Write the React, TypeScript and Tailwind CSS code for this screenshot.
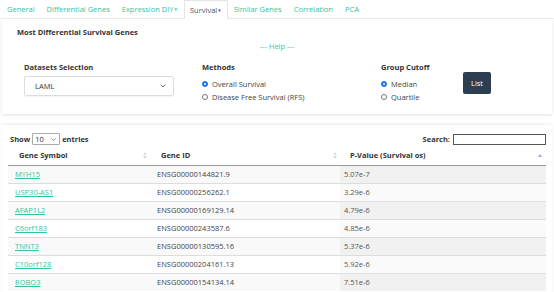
import React from 'react';
import { ChevronDown } from 'lucide-react';

const TABS = [
  { label: 'General' },
  { label: 'Differential Genes' },
  { label: 'Expression DIY', caret: true },
  { label: 'Survival', caret: true, active: true },
  { label: 'Similar Genes' },
  { label: 'Correlation' },
  { label: 'PCA' },
];

const ROWS = [
  ['MYH15', 'ENSG00000144821.9', '5.07e-7'],
  ['USP30-AS1', 'ENSG00000256262.1', '3.29e-6'],
  ['AFAP1L2', 'ENSG00000169129.14', '4.79e-6'],
  ['C6orf183', 'ENSG00000243587.6', '4.85e-6'],
  ['TNNT3', 'ENSG00000130595.16', '5.37e-6'],
  ['C10orf128', 'ENSG00000204161.13', '5.92e-6'],
  ['ROBO3', 'ENSG00000154134.14', '7.51e-6'],
];

const Radio = ({ checked, label }: { checked?: boolean; label: string }) => (
  <div className="flex items-center h-[13px] gap-[4px]">
    {checked ? (
      <span className="w-[6px] h-[6px] rounded-full bg-[#1a73e8] border border-[#1a73e8] flex items-center justify-center">
        <span className="w-[2px] h-[2px] rounded-full bg-white" />
      </span>
    ) : (
      <span className="w-[6px] h-[6px] rounded-full border border-[#777] bg-white" />
    )}
    <span>{label}</span>
  </div>
);

const SortBoth = () => (
  <svg width="4" height="7" viewBox="0 0 4 7" className="opacity-40">
    <path d="M2 0 L4 3 L0 3 Z" fill="#aaa" />
    <path d="M2 7 L4 4 L0 4 Z" fill="#aaa" />
  </svg>
);

export default function App() {
  return (
    <div className="w-[554px] h-[292px] overflow-hidden bg-white text-[#333] text-[7.5px] leading-[10px]" style={{ fontFamily: '"Open Sans", "Noto Sans", sans-serif' }}>
      {/* nav */}
      <div className="h-[19px] flex items-stretch pl-[1px] border-b border-[#eee]">
        {TABS.map((t) => (
          <div
            key={t.label}
            className={
              t.active
                ? 'px-[5px] flex items-center bg-white border-x border-t border-[#e5e5e5] text-[#555] -mb-px'
                : 'px-[6px] flex items-center text-[#35c39f]'
            }
          >
            {t.label}
            {t.caret && <span className="text-[4.5px]">▼</span>}
          </div>
        ))}
      </div>

      {/* survival panel */}
      <div className="mx-[2px] h-[95px] bg-white shadow-[0_1px_3px_rgba(0,0,0,0.12)] pt-[8px] px-[15px]">
        <div className="font-bold text-[#333] h-[10px]">Most Differential Survival Genes</div>
        <div className="text-center text-[#35c39f] mt-[4px] h-[10px]">--- Help ---</div>
        <div className="flex mt-[11px] pl-[7px]">
          <div className="w-[178px]">
            <div className="font-bold h-[10px]">Datasets Selection</div>
            <div className="mt-[4px] w-[150px] h-[20px] border border-[#ddd] rounded-[2px] flex items-center justify-between pl-[10px] pr-[6px] shadow-[0_1px_1px_rgba(0,0,0,0.05)]">
              <span>LAML</span>
              <ChevronDown size={8} strokeWidth={2} />
            </div>
          </div>
          <div className="w-[179px]">
            <div className="font-bold h-[10px]">Methods</div>
            <div className="mt-[5px] text-[#444]">
              <Radio checked label="Overall Survival" />
              <Radio label="Disease Free Survival (RFS)" />
            </div>
          </div>
          <div className="w-[82px]">
            <div className="font-bold h-[10px]">Group Cutoff</div>
            <div className="mt-[5px] text-[#444]">
              <Radio checked label="Median" />
              <Radio label="Quartile" />
            </div>
          </div>
          <div className="pt-[10px]">
            <button className="w-[28px] h-[22px] bg-[#2c3e50] text-white rounded-[2px] flex items-center justify-center">
              List
            </button>
          </div>
        </div>
      </div>

      {/* table panel */}
      <div className="mx-[2px] mt-[11px] h-[200px] bg-white shadow-[0_-1px_2px_rgba(0,0,0,0.08)] pt-[8px] pl-[6px] pr-[6px]">
        <div className="flex items-center justify-between h-[12px] pl-[2px]">
          <div className="flex items-center font-bold">
            <span>Show</span>
            <span className="mx-[2px] w-[28px] h-[12px] border border-[#aaa] rounded-[1px] flex items-center justify-between px-[2px] font-normal">
              <span>10</span>
              <ChevronDown size={7} strokeWidth={2} />
            </span>
            <span>entries</span>
          </div>
          <div className="flex items-center font-bold">
            <span>Search:</span>
            <span className="ml-[3px] w-[93px] h-[11px] border border-[#555]" />
          </div>
        </div>
        <table className="mt-[1px] w-[538px] border-collapse table-fixed">
          <colgroup>
            <col className="w-[142px]" />
            <col className="w-[190px]" />
            <col className="w-[206px]" />
          </colgroup>
          <thead>
            <tr className="h-[19px] border-b border-[#999] font-bold">
              <th className="text-left pl-[11px] pr-[3px] font-bold">
                <div className="flex items-center justify-between">
                  <span>Gene Symbol</span>
                  <SortBoth />
                </div>
              </th>
              <th className="text-left pl-[11px] pr-[3px] font-bold">
                <div className="flex items-center justify-between">
                  <span>Gene ID</span>
                  <SortBoth />
                </div>
              </th>
              <th className="text-left pl-[10px] pr-[4px] font-bold">
                <div className="flex items-center justify-between">
                  <span>P-Value (Survival os)</span>
                  <svg width="4" height="3" viewBox="0 0 4 3">
                    <path d="M2 0 L4 3 L0 3 Z" fill="#a3a9d4" />
                  </svg>
                </div>
              </th>
            </tr>
          </thead>
          <tbody>
            {ROWS.map((r, i) => (
              <tr key={r[0]} className={`h-[18px] border-t border-[#ddd] ${i % 2 === 0 ? 'bg-[#f9f9f9]' : 'bg-white'}`}>
                <td className="pl-[7px]">
                  <span className="text-[#35c39f] underline">{r[0]}</span>
                </td>
                <td className="pl-[7px] text-[#444]">{r[1]}</td>
                <td className={`pl-[4px] text-[#555] ${i % 2 === 0 ? 'bg-[#f1f1f1]' : 'bg-[#fafafa]'}`}>{r[2]}</td>
              </tr>
            ))}
          </tbody>
        </table>
      </div>
    </div>
  );
}
